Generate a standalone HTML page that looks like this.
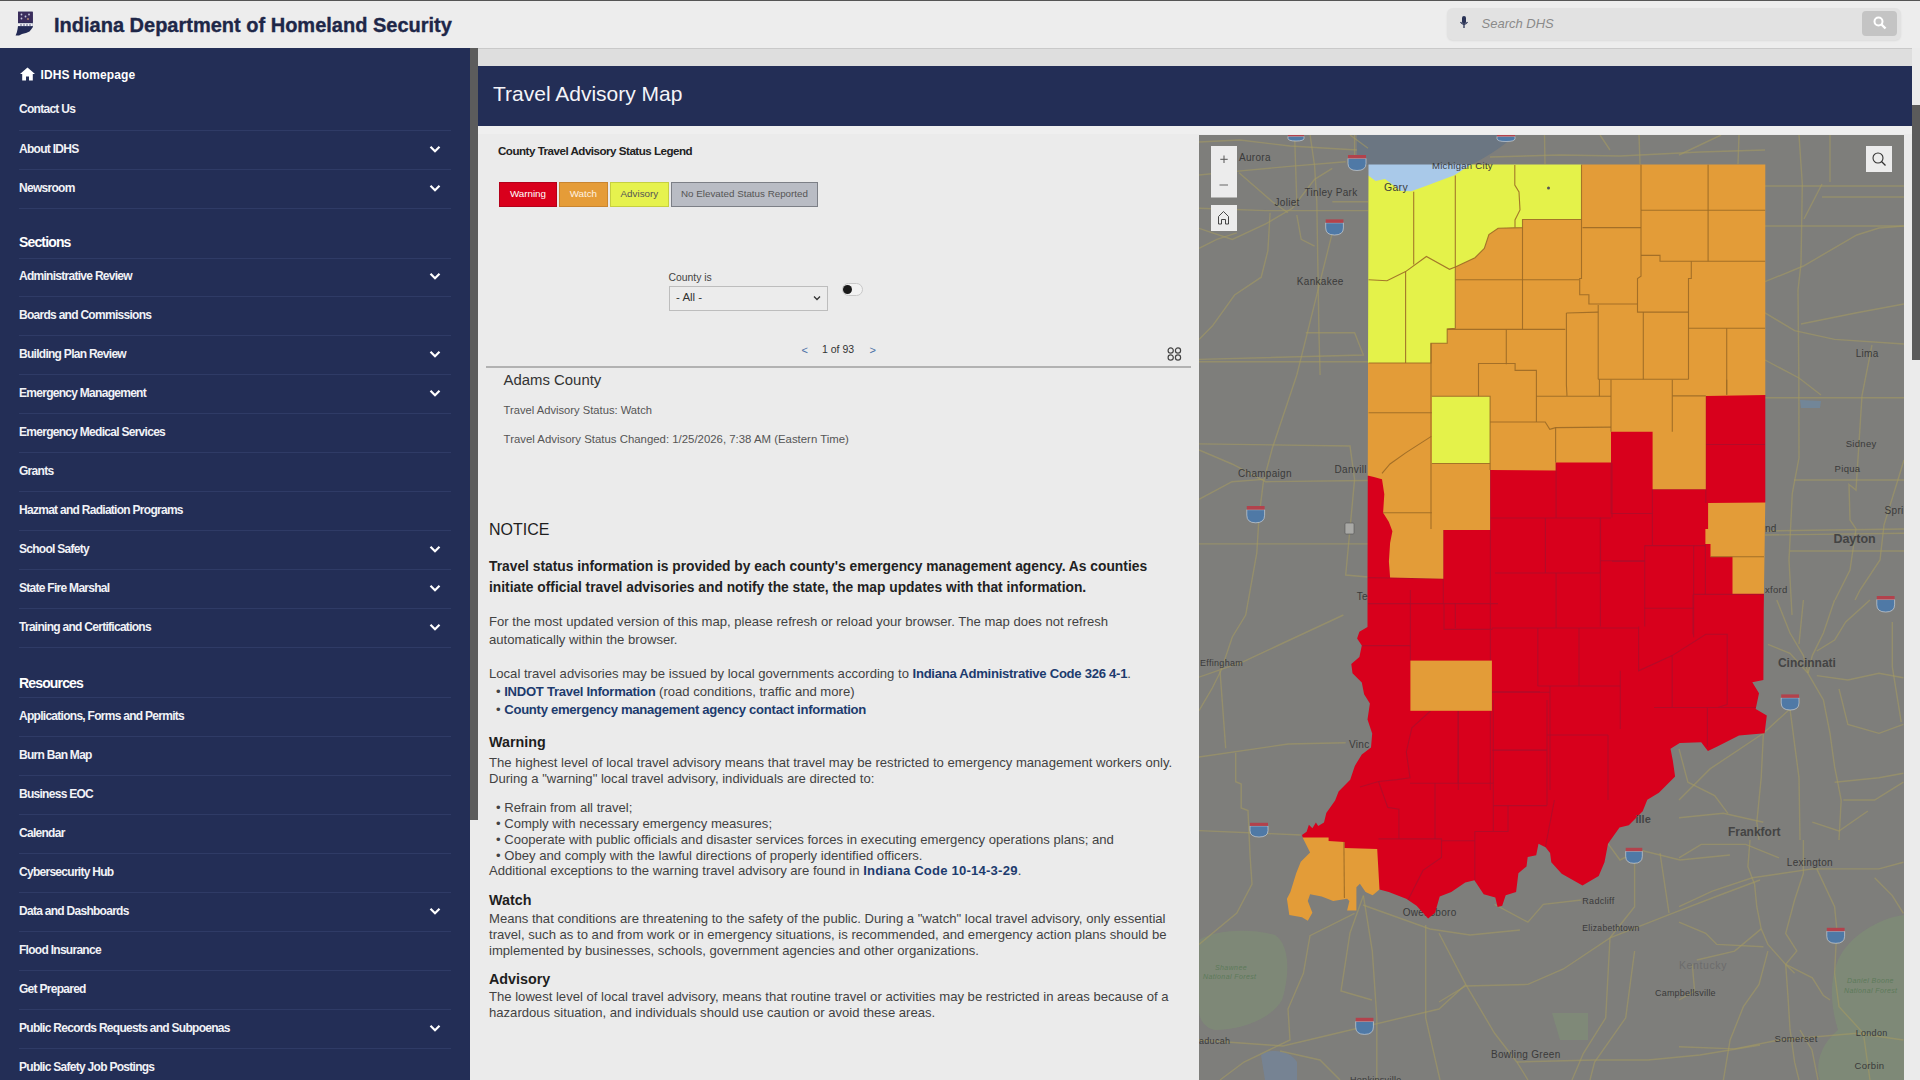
<!DOCTYPE html>
<html><head><meta charset="utf-8">
<style>
*{box-sizing:border-box;margin:0;padding:0}
html,body{width:1920px;height:1080px;overflow:hidden;background:#ebebeb;font-family:"Liberation Sans",sans-serif}
.tx{position:absolute;white-space:nowrap}
#topline{position:absolute;left:0;top:0;width:1920px;height:1px;background:#555}
#hdr{position:absolute;left:0;top:1px;width:1920px;height:47px;background:#ededed}
#hdr .title{position:absolute;left:54px;top:13px;font-size:20px;font-weight:bold;color:#1e2748;white-space:nowrap;-webkit-text-stroke:0.35px #1e2748}
#search{position:absolute;left:1446.5px;top:7px;width:454px;height:32px;background:#e2e2e2;border-radius:6px;box-shadow:0 1px 2px rgba(0,0,0,.08)}
#search .ph{position:absolute;left:35px;top:8px;font-size:13px;font-style:italic;color:#8a8a8a}
#search .btn{position:absolute;left:415.5px;top:3.4px;width:35px;height:24.6px;background:#c4c4c4;border-radius:4px}
#side{position:absolute;left:0;top:48px;width:470px;height:1032px;background:#232e56}
#sbar{position:absolute;left:470px;top:48px;width:8px;height:772px;background:#5c5c5c}
#side .sep{position:absolute;left:19px;width:432px;height:1px;background:#2f3b66}
#side .chev{position:absolute;left:429px}
#strip{position:absolute;left:478px;top:48px;width:1434px;height:18px;background:#dedede}
#tbar{position:absolute;left:478px;top:66px;width:1434px;height:60px;background:#232e56}
#tbar .t{position:absolute;left:15px;top:16px;font-size:21px;color:#f4f4f8;white-space:nowrap}
#pscroll{position:absolute;left:1912px;top:105px;width:8px;height:255px;background:#5b5b5b}
#left{position:absolute;left:478px;top:126px;width:721px;height:954px;color:#2b2b2b}
#map{position:absolute;left:1199px;top:135px;width:705px;height:945px;background:#7d7d79;overflow:hidden}
.lg{position:absolute;font-size:9.8px;text-align:center;line-height:22px;white-space:nowrap}

#left b{letter-spacing:-0.28px}

</style></head>
<body>
<div id="topline"></div>
<div id="hdr">
  <svg style="position:absolute;left:0;top:-1px" width="50" height="48" viewBox="0 0 50 48">
    <path d="M18,11.7 L32.7,11.7 L32.9,27 L31.5,29 L29.5,31.5 L26,33 L22,34 L19,35.5 L15.6,35.5 L16.8,32.5 L17.6,29 L18,26 Z" fill="#232a55"/>
    <path d="M18,11.7 L32.7,11.7 L32.8,22.5 L18,22.5 Z" fill="#3a2d5c"/>
    <rect x="18" y="23.2" width="14.8" height="2.9" fill="#f4f4f8"/>
    <circle cx="21.5" cy="14.5" r=".9" fill="#c9c9e0"/><circle cx="25.5" cy="16.5" r=".9" fill="#c9c9e0"/><circle cx="29" cy="14.5" r=".9" fill="#c9c9e0"/><circle cx="21.5" cy="18.5" r=".9" fill="#c9c9e0"/><circle cx="28" cy="19" r="1" fill="#b08a70"/>
    <path d="M21,24 L21,26 M24,24 L24,26 M27,24 L27,26 M30,24 L30,26" stroke="#3a3f66" stroke-width=".8"/>
  </svg>
  <div class="title">Indiana Department of Homeland Security</div>
  <div id="search">
    <svg style="position:absolute;left:12px;top:7px" width="10" height="16" viewBox="0 0 10 16"><rect x="3" y="1" width="4" height="8" rx="2" fill="#2a3356"/><path d="M1.5 7 Q5 12 8.5 7 M5 10 L5 13" stroke="#2a3356" stroke-width="1.3" fill="none"/></svg>
    <div class="ph">Search DHS</div>
    <div class="btn"><svg style="position:absolute;left:11px;top:5px" width="14" height="14" viewBox="0 0 14 14"><circle cx="5.5" cy="5.5" r="4" stroke="#fff" stroke-width="2" fill="none"/><path d="M8.5 8.5 L12.5 12.5" stroke="#fff" stroke-width="2.4"/></svg></div>
  </div>
</div>
<div id="side">
<svg style="position:absolute;left:20px;top:19px" width="15" height="14" viewBox="0 0 15 14"><path d="M7.5 0.5 L15 7 L12.8 7 L12.8 13.5 L9 13.5 L9 9.5 L6 9.5 L6 13.5 L2.2 13.5 L2.2 7 L0 7 Z" fill="#fff"/></svg><div class="tx" style="left:40.5px;top:20.94px;font-size:12px;line-height:12px;font-weight:bold;color:#fff;letter-spacing:0.1px;">IDHS Homepage</div>
<div class="tx" style="left:19px;top:54.99px;font-size:12px;line-height:12px;font-weight:bold;color:#f1f2f6;letter-spacing:-0.72px;">Contact Us</div>
<div class="tx" style="left:19px;top:95.24px;font-size:12px;line-height:12px;font-weight:bold;color:#f1f2f6;letter-spacing:-0.72px;">About IDHS</div>
<svg class="chev" style="top:97.2px" width="12" height="9" viewBox="0 0 12 9"><path d="M1.5 1.8 L6 6.3 L10.5 1.8" stroke="#fff" stroke-width="2.2" fill="none"/></svg><div class="tx" style="left:19px;top:134.24px;font-size:12px;line-height:12px;font-weight:bold;color:#f1f2f6;letter-spacing:-0.72px;">Newsroom</div>
<svg class="chev" style="top:136.2px" width="12" height="9" viewBox="0 0 12 9"><path d="M1.5 1.8 L6 6.3 L10.5 1.8" stroke="#fff" stroke-width="2.2" fill="none"/></svg><div class="tx" style="left:19px;top:222.24px;font-size:12px;line-height:12px;font-weight:bold;color:#f1f2f6;letter-spacing:-0.72px;">Administrative Review</div>
<svg class="chev" style="top:224.2px" width="12" height="9" viewBox="0 0 12 9"><path d="M1.5 1.8 L6 6.3 L10.5 1.8" stroke="#fff" stroke-width="2.2" fill="none"/></svg><div class="tx" style="left:19px;top:261.24px;font-size:12px;line-height:12px;font-weight:bold;color:#f1f2f6;letter-spacing:-0.72px;">Boards and Commissions</div>
<div class="tx" style="left:19px;top:300.24px;font-size:12px;line-height:12px;font-weight:bold;color:#f1f2f6;letter-spacing:-0.72px;">Building Plan Review</div>
<svg class="chev" style="top:302.2px" width="12" height="9" viewBox="0 0 12 9"><path d="M1.5 1.8 L6 6.3 L10.5 1.8" stroke="#fff" stroke-width="2.2" fill="none"/></svg><div class="tx" style="left:19px;top:339.24px;font-size:12px;line-height:12px;font-weight:bold;color:#f1f2f6;letter-spacing:-0.72px;">Emergency Management</div>
<svg class="chev" style="top:341.2px" width="12" height="9" viewBox="0 0 12 9"><path d="M1.5 1.8 L6 6.3 L10.5 1.8" stroke="#fff" stroke-width="2.2" fill="none"/></svg><div class="tx" style="left:19px;top:378.24px;font-size:12px;line-height:12px;font-weight:bold;color:#f1f2f6;letter-spacing:-0.72px;">Emergency Medical Services</div>
<div class="tx" style="left:19px;top:417.24px;font-size:12px;line-height:12px;font-weight:bold;color:#f1f2f6;letter-spacing:-0.72px;">Grants</div>
<div class="tx" style="left:19px;top:456.24px;font-size:12px;line-height:12px;font-weight:bold;color:#f1f2f6;letter-spacing:-0.72px;">Hazmat and Radiation Programs</div>
<div class="tx" style="left:19px;top:495.24px;font-size:12px;line-height:12px;font-weight:bold;color:#f1f2f6;letter-spacing:-0.72px;">School Safety</div>
<svg class="chev" style="top:497.2px" width="12" height="9" viewBox="0 0 12 9"><path d="M1.5 1.8 L6 6.3 L10.5 1.8" stroke="#fff" stroke-width="2.2" fill="none"/></svg><div class="tx" style="left:19px;top:534.24px;font-size:12px;line-height:12px;font-weight:bold;color:#f1f2f6;letter-spacing:-0.72px;">State Fire Marshal</div>
<svg class="chev" style="top:536.2px" width="12" height="9" viewBox="0 0 12 9"><path d="M1.5 1.8 L6 6.3 L10.5 1.8" stroke="#fff" stroke-width="2.2" fill="none"/></svg><div class="tx" style="left:19px;top:573.24px;font-size:12px;line-height:12px;font-weight:bold;color:#f1f2f6;letter-spacing:-0.72px;">Training and Certifications</div>
<svg class="chev" style="top:575.2px" width="12" height="9" viewBox="0 0 12 9"><path d="M1.5 1.8 L6 6.3 L10.5 1.8" stroke="#fff" stroke-width="2.2" fill="none"/></svg><div class="tx" style="left:19px;top:662.24px;font-size:12px;line-height:12px;font-weight:bold;color:#f1f2f6;letter-spacing:-0.72px;">Applications, Forms and Permits</div>
<div class="tx" style="left:19px;top:701.24px;font-size:12px;line-height:12px;font-weight:bold;color:#f1f2f6;letter-spacing:-0.72px;">Burn Ban Map</div>
<div class="tx" style="left:19px;top:740.24px;font-size:12px;line-height:12px;font-weight:bold;color:#f1f2f6;letter-spacing:-0.72px;">Business EOC</div>
<div class="tx" style="left:19px;top:779.24px;font-size:12px;line-height:12px;font-weight:bold;color:#f1f2f6;letter-spacing:-0.72px;">Calendar</div>
<div class="tx" style="left:19px;top:818.24px;font-size:12px;line-height:12px;font-weight:bold;color:#f1f2f6;letter-spacing:-0.72px;">Cybersecurity Hub</div>
<div class="tx" style="left:19px;top:857.24px;font-size:12px;line-height:12px;font-weight:bold;color:#f1f2f6;letter-spacing:-0.72px;">Data and Dashboards</div>
<svg class="chev" style="top:859.2px" width="12" height="9" viewBox="0 0 12 9"><path d="M1.5 1.8 L6 6.3 L10.5 1.8" stroke="#fff" stroke-width="2.2" fill="none"/></svg><div class="tx" style="left:19px;top:896.24px;font-size:12px;line-height:12px;font-weight:bold;color:#f1f2f6;letter-spacing:-0.72px;">Flood Insurance</div>
<div class="tx" style="left:19px;top:935.24px;font-size:12px;line-height:12px;font-weight:bold;color:#f1f2f6;letter-spacing:-0.72px;">Get Prepared</div>
<div class="tx" style="left:19px;top:974.24px;font-size:12px;line-height:12px;font-weight:bold;color:#f1f2f6;letter-spacing:-0.72px;">Public Records Requests and Subpoenas</div>
<svg class="chev" style="top:976.2px" width="12" height="9" viewBox="0 0 12 9"><path d="M1.5 1.8 L6 6.3 L10.5 1.8" stroke="#fff" stroke-width="2.2" fill="none"/></svg><div class="tx" style="left:19px;top:1013.24px;font-size:12px;line-height:12px;font-weight:bold;color:#f1f2f6;letter-spacing:-0.72px;">Public Safety Job Postings</div>
<div class="sep" style="top:82px"></div><div class="sep" style="top:121px"></div><div class="sep" style="top:159.5px"></div><div class="sep" style="top:209.5px"></div><div class="sep" style="top:248px"></div><div class="sep" style="top:287px"></div><div class="sep" style="top:326px"></div><div class="sep" style="top:365px"></div><div class="sep" style="top:404px"></div><div class="sep" style="top:443px"></div><div class="sep" style="top:482px"></div><div class="sep" style="top:521px"></div><div class="sep" style="top:560px"></div><div class="sep" style="top:599px"></div><div class="sep" style="top:648.75px"></div><div class="sep" style="top:688px"></div><div class="sep" style="top:727px"></div><div class="sep" style="top:766px"></div><div class="sep" style="top:805px"></div><div class="sep" style="top:844px"></div><div class="sep" style="top:883px"></div><div class="sep" style="top:922px"></div><div class="sep" style="top:961px"></div><div class="sep" style="top:1000px"></div><div class="sep" style="top:1039px"></div><div class="tx" style="left:19px;top:187.18px;font-size:14px;line-height:14px;font-weight:bold;color:#fff;letter-spacing:-0.85px;">Sections</div>
<div class="tx" style="left:19px;top:627.68px;font-size:14px;line-height:14px;font-weight:bold;color:#fff;letter-spacing:-0.85px;">Resources</div>

</div>
<div id="sbar"></div>
<div id="strip"></div>
<div style="position:absolute;left:478px;top:48px;width:1434px;height:1px;background:#c9c9c9"></div>
<div id="tbar"><div class="t">Travel Advisory Map</div></div>
<div id="pscroll"></div>
<div style="position:absolute;left:478px;top:126px;width:1434px;height:8px;background:#efefef"></div>
<div id="left">
<div class="tx" style="left:20px;top:19.19px;font-size:11.6px;line-height:11.6px;font-weight:bold;color:#222;letter-spacing:-0.5px;">County Travel Advisory Status Legend</div>
<div class="lg" style="left:21.19999999999999px;top:55.5px;width:57.50000000000006px;height:25.5px;background:#d9001c;border:1.5px solid #b3001a;color:#fff">Warning</div><div class="lg" style="left:81px;top:55.5px;width:48.700000000000045px;height:25.5px;background:#e59c38;border:1.5px solid #c98530;color:#fff3e0">Watch</div><div class="lg" style="left:132px;top:55.5px;width:58.75px;height:25.5px;background:#e6f24e;border:1.5px solid #c6d040;color:#555">Advisory</div><div class="lg" style="left:193px;top:55.5px;width:147px;height:25.5px;background:#b9bcc4;border:1.5px solid #7c7f86;color:#555">No Elevated Status Reported</div><div class="tx" style="left:190.5px;top:147.15px;font-size:10.4px;line-height:10.4px;font-weight:normal;color:#444;letter-spacing:0px;">County is</div>
<div style="position:absolute;left:190.5px;top:160px;width:159px;height:25px;border:1px solid #bdbdbd;background:#ececec"></div><div class="tx" style="left:198px;top:166.00px;font-size:11.5px;line-height:11.5px;font-weight:normal;color:#333;letter-spacing:0px;">- All -</div>
<svg style="position:absolute;left:335px;top:169px" width="8" height="6" viewBox="0 0 8 6"><path d="M1 1.5 L4 4.5 L7 1.5" stroke="#333" stroke-width="1.3" fill="none"/></svg><div style="position:absolute;left:363.5px;top:157px;width:21.5px;height:13px;border:1px solid #c8c8c8;border-radius:7px;background:#f2f2f2"></div><div style="position:absolute;left:365px;top:159px;width:9px;height:9px;border-radius:5px;background:#1a1a1a"></div><div class="tx" style="left:323.5px;top:219.07px;font-size:11px;line-height:11px;font-weight:normal;color:#4a6fa5;letter-spacing:0px;">&lt;</div>
<div class="tx" style="left:344px;top:217.63px;font-size:10.5px;line-height:10.5px;font-weight:normal;color:#333;letter-spacing:0px;">1 of 93</div>
<div class="tx" style="left:391.5px;top:219.07px;font-size:11px;line-height:11px;font-weight:normal;color:#4a6fa5;letter-spacing:0px;">&gt;</div>
<svg style="position:absolute;left:689px;top:221px" width="15" height="14" viewBox="0 0 15 14"><g stroke="#444" stroke-width="1.2" fill="none"><circle cx="3.7" cy="3.5" r="2.6"/><circle cx="11" cy="3.5" r="2.6"/><circle cx="3.7" cy="10.5" r="2.6"/><circle cx="11" cy="10.5" r="2.6"/></g></svg><div style="position:absolute;left:7.600000000000023px;top:239.5px;width:705px;height:2px;background:#b2b2b2"></div><div class="tx" style="left:25.600000000000023px;top:247.06px;font-size:14.9px;line-height:14.9px;font-weight:normal;color:#333;letter-spacing:0px;">Adams County</div>
<div class="tx" style="left:25.600000000000023px;top:279.44px;font-size:11.2px;line-height:11.2px;font-weight:normal;color:#555;letter-spacing:0px;">Travel Advisory Status: Watch</div>
<div class="tx" style="left:25.600000000000023px;top:307.52px;font-size:11.4px;line-height:11.4px;font-weight:normal;color:#555;letter-spacing:0px;">Travel Advisory Status Changed: 1/25/2026, 7:38 AM (Eastern Time)</div>
<div class="tx" style="left:11px;top:395.72px;font-size:16px;line-height:16px;font-weight:normal;color:#1e1e1e;letter-spacing:0px;">NOTICE</div>
<div class="tx" style="left:11px;top:433.51px;font-size:13.8px;line-height:13.8px;font-weight:bold;color:#222;letter-spacing:0px;">Travel status information is provided by each county&#x27;s emergency management agency. As counties</div>
<div class="tx" style="left:11px;top:454.51px;font-size:13.8px;line-height:13.8px;font-weight:bold;color:#222;letter-spacing:0px;">initiate official travel advisories and notify the state, the map updates with that information.</div>
<div class="tx" style="left:11px;top:489.20px;font-size:13.1px;line-height:13.1px;font-weight:normal;color:#424242;letter-spacing:0px;">For the most updated version of this map, please refresh or reload your browser. The map does not refresh</div>
<div class="tx" style="left:11px;top:507.20px;font-size:13.1px;line-height:13.1px;font-weight:normal;color:#424242;letter-spacing:0px;">automatically within the browser.</div>
<div class="tx" style="left:11px;top:540.50px;font-size:13.1px;line-height:13.1px;font-weight:normal;color:#424242;letter-spacing:0px;">Local travel advisories may be issued by local governments according to <b style="color:#1d3b6e">Indiana Administrative Code 326 4-1</b>.</div>
<div class="tx" style="left:18px;top:558.50px;font-size:13.1px;line-height:13.1px;font-weight:normal;color:#424242;letter-spacing:0px;">&bull; <b style="color:#1d3b6e">INDOT Travel Information</b> (road conditions, traffic and more)</div>
<div class="tx" style="left:18px;top:576.50px;font-size:13.1px;line-height:13.1px;font-weight:normal;color:#424242;letter-spacing:0px;">&bull; <b style="color:#1d3b6e">County emergency management agency contact information</b></div>
<div class="tx" style="left:11px;top:609.04px;font-size:14.3px;line-height:14.3px;font-weight:bold;color:#1e1e1e;letter-spacing:0px;">Warning</div>
<div class="tx" style="left:11px;top:629.80px;font-size:13.1px;line-height:13.1px;font-weight:normal;color:#424242;letter-spacing:0px;">The highest level of local travel advisory means that travel may be restricted to emergency management workers only.</div>
<div class="tx" style="left:11px;top:645.50px;font-size:13.1px;line-height:13.1px;font-weight:normal;color:#424242;letter-spacing:0px;">During a &quot;warning&quot; local travel advisory, individuals are directed to:</div>
<div class="tx" style="left:18px;top:674.80px;font-size:13.1px;line-height:13.1px;font-weight:normal;color:#424242;letter-spacing:0px;">&bull; Refrain from all travel;</div>
<div class="tx" style="left:18px;top:691.00px;font-size:13.1px;line-height:13.1px;font-weight:normal;color:#424242;letter-spacing:0px;">&bull; Comply with necessary emergency measures;</div>
<div class="tx" style="left:18px;top:707.20px;font-size:13.1px;line-height:13.1px;font-weight:normal;color:#424242;letter-spacing:0px;">&bull; Cooperate with public officials and disaster services forces in executing emergency operations plans; and</div>
<div class="tx" style="left:18px;top:723.40px;font-size:13.1px;line-height:13.1px;font-weight:normal;color:#424242;letter-spacing:0px;">&bull; Obey and comply with the lawful directions of properly identified officers.</div>
<div class="tx" style="left:11px;top:737.90px;font-size:13.1px;line-height:13.1px;font-weight:normal;color:#424242;letter-spacing:0px;">Additional exceptions to the warning travel advisory are found in <b style="color:#1d3b6e;letter-spacing:0.2px">Indiana Code 10-14-3-29</b>.</div>
<div class="tx" style="left:11px;top:767.04px;font-size:14.3px;line-height:14.3px;font-weight:bold;color:#1e1e1e;letter-spacing:0px;">Watch</div>
<div class="tx" style="left:11px;top:785.50px;font-size:13.1px;line-height:13.1px;font-weight:normal;color:#424242;letter-spacing:0px;">Means that conditions are threatening to the safety of the public. During a &quot;watch&quot; local travel advisory, only essential</div>
<div class="tx" style="left:11px;top:801.70px;font-size:13.1px;line-height:13.1px;font-weight:normal;color:#424242;letter-spacing:0px;">travel, such as to and from work or in emergency situations, is recommended, and emergency action plans should be</div>
<div class="tx" style="left:11px;top:817.80px;font-size:13.1px;line-height:13.1px;font-weight:normal;color:#424242;letter-spacing:0px;">implemented by businesses, schools, government agencies and other organizations.</div>
<div class="tx" style="left:11px;top:845.74px;font-size:14.3px;line-height:14.3px;font-weight:bold;color:#1e1e1e;letter-spacing:0px;">Advisory</div>
<div class="tx" style="left:11px;top:864.30px;font-size:13.1px;line-height:13.1px;font-weight:normal;color:#424242;letter-spacing:0px;">The lowest level of local travel advisory, means that routine travel or activities may be restricted in areas because of a</div>
<div class="tx" style="left:11px;top:880.30px;font-size:13.1px;line-height:13.1px;font-weight:normal;color:#424242;letter-spacing:0px;">hazardous situation, and individuals should use caution or avoid these areas.</div>

</div>
<div id="map">
<svg width="705" height="945" viewBox="1199 135 705 945" style="position:absolute;left:0;top:0">
<rect x="1199" y="135" width="705" height="945" fill="#7e7e7b"/>
<path d="M1199,940 C1215,930 1250,928 1275,935 C1290,945 1290,975 1282,1000 C1270,1020 1240,1030 1215,1030 C1205,1028 1199,1020 1199,1010 Z" fill="#7f8f75" opacity=".6"/>
<path d="M1552,1013 L1588,1013 L1588,1040 L1560,1040 Z" fill="#809276" opacity=".55"/>
<path d="M1904,915 C1880,918 1850,935 1838,960 C1828,985 1832,1010 1838,1030 C1820,1045 1815,1065 1820,1080 L1904,1080 Z" fill="#7e9175" opacity=".6"/>
<path d="M1261,1055 C1270,1048 1290,1050 1297,1062 L1297,1080 L1265,1080 Z" fill="#74859a" opacity=".8"/>
<path d="M1800,400 L1821,401 L1820,408 L1801,408 Z" fill="#6f88a0" opacity=".8"/>
<path d="M1357,135 L1515,135 C1505,145 1490,155 1471,165 L1357,165 Z" fill="#6b7682"/>
<polyline points="1296.8,375.0 1272.3,448.3 1263.4,481.7 1259.0,517.0 1256.8,552.8 1245.7,615.0 1232.3,637.0 1221.0,670.6 1212.3,688.0 1199.0,710.6" fill="none" stroke="#a39a62" stroke-width="1.4" opacity=".6"/>
<polyline points="1199.0,443.9 1350.0,446.0 1354.6,479.4 1345.7,575.0 1368.0,577.0" fill="none" stroke="#a39a62" stroke-width="1.4" opacity=".6"/>
<polyline points="1199.0,450.0 1232.0,464.0 1265.7,481.7 1368.0,480.5" fill="none" stroke="#a39a62" stroke-width="1.4" opacity=".6"/>
<polyline points="1199.0,499.4 1232.0,481.7 1263.4,479.4" fill="none" stroke="#a39a62" stroke-width="1.4" opacity=".6"/>
<polyline points="1199.0,543.9 1368.0,543.9" fill="none" stroke="#a39a62" stroke-width="1.4" opacity=".6"/>
<polyline points="1343.4,615.0 1276.8,646.0 1243.4,661.7 1199.0,677.2" fill="none" stroke="#a39a62" stroke-width="1.4" opacity=".6"/>
<polyline points="1220.0,670.6 1225.7,748.3" fill="none" stroke="#a39a62" stroke-width="1.4" opacity=".6"/>
<polyline points="1199.0,757.0 1288.0,744.0 1345.7,742.8" fill="none" stroke="#a39a62" stroke-width="1.4" opacity=".6"/>
<polyline points="1235.7,752.8 1235.7,781.7 1241.2,784.0 1241.2,808.0 1248.0,810.6 1250.0,855.0 1252.0,884.0 1236.8,913.0 1199.0,944.4" fill="none" stroke="#a39a62" stroke-width="1.4" opacity=".6"/>
<polyline points="1199.0,830.6 1301.0,835.0" fill="none" stroke="#a39a62" stroke-width="1.4" opacity=".6"/>
<polyline points="1294.6,135.0 1296.8,201.7" fill="none" stroke="#a39a62" stroke-width="1.4" opacity=".6"/>
<polyline points="1310.1,135.0 1314.6,166.0 1316.8,201.7 1319.0,335.0 1320.1,375.0" fill="none" stroke="#a39a62" stroke-width="1.4" opacity=".6"/>
<polyline points="1354.6,135.0 1354.6,161.7" fill="none" stroke="#a39a62" stroke-width="1.4" opacity=".6"/>
<polyline points="1239.0,172.8 1272.3,201.7 1287.9,212.8" fill="none" stroke="#a39a62" stroke-width="1.4" opacity=".6"/>
<polyline points="1199.0,175.0 1243.4,170.6 1292.3,166.1 1345.7,161.7" fill="none" stroke="#a39a62" stroke-width="1.4" opacity=".6"/>
<polyline points="1199.0,142.0 1240.0,140.0 1290.0,146.0 1357.0,150.0" fill="none" stroke="#a39a62" stroke-width="1.4" opacity=".6"/>
<polyline points="1199.0,208.3 1265.7,210.6 1368.0,210.6" fill="none" stroke="#a39a62" stroke-width="1.4" opacity=".6"/>
<polyline points="1199.0,228.3 1232.3,239.4 1265.7,223.9 1292.3,208.3 1314.6,179.4 1332.3,168.3" fill="none" stroke="#a39a62" stroke-width="1.4" opacity=".6"/>
<polyline points="1270.1,212.8 1267.9,250.6 1261.2,277.2 1234.6,295.0 1212.3,326.1 1199.0,339.4" fill="none" stroke="#a39a62" stroke-width="1.4" opacity=".6"/>
<polyline points="1332.3,232.8 1321.2,277.2 1307.9,330.6 1296.8,375.0" fill="none" stroke="#a39a62" stroke-width="1.4" opacity=".6"/>
<polyline points="1296.8,215.0 1301.2,239.4 1314.6,246.1" fill="none" stroke="#a39a62" stroke-width="1.4" opacity=".6"/>
<polyline points="1199.0,248.3 1216.8,239.4 1236.8,232.8" fill="none" stroke="#a39a62" stroke-width="1.4" opacity=".6"/>
<polyline points="1305.7,332.8 1354.6,332.8 1363.4,355.0 1199.0,359.4" fill="none" stroke="#a39a62" stroke-width="1.4" opacity=".6"/>
<polyline points="1199.0,361.7 1368.0,361.7" fill="none" stroke="#a39a62" stroke-width="1.4" opacity=".6"/>
<polyline points="1332.3,201.7 1368.0,201.7" fill="none" stroke="#a39a62" stroke-width="1.4" opacity=".6"/>
<polyline points="1350.0,135.0 1368.0,148.3" fill="none" stroke="#a39a62" stroke-width="1.4" opacity=".6"/>
<polyline points="1544.5,135.0 1545.0,164.0" fill="none" stroke="#a39a62" stroke-width="1.4" opacity=".6"/>
<polyline points="1639.0,135.0 1640.0,164.0" fill="none" stroke="#a39a62" stroke-width="1.4" opacity=".6"/>
<polyline points="1490.0,157.0 1560.0,155.0 1620.0,156.0 1700.0,152.0 1765.0,150.0" fill="none" stroke="#a39a62" stroke-width="1.4" opacity=".6"/>
<polyline points="1600.0,135.0 1610.0,150.0" fill="none" stroke="#a39a62" stroke-width="1.4" opacity=".6"/>
<polyline points="1363.4,895.6 1350.0,933.0 1341.0,991.0 1372.0,1000.0" fill="none" stroke="#a39a62" stroke-width="1.4" opacity=".6"/>
<polyline points="1363.4,895.6 1372.3,951.0 1376.8,1017.8 1376.8,1080.0" fill="none" stroke="#a39a62" stroke-width="1.4" opacity=".6"/>
<polyline points="1354.6,913.3 1310.0,935.6 1303.4,973.3 1288.0,1009.0 1290.0,1040.0 1244.0,1062.0 1220.0,1080.0" fill="none" stroke="#a39a62" stroke-width="1.4" opacity=".6"/>
<polyline points="1199.0,1040.0 1283.0,1046.0 1354.6,1029.0 1439.0,1009.0 1465.7,984.4" fill="none" stroke="#a39a62" stroke-width="1.4" opacity=".6"/>
<polyline points="1363.0,905.0 1430.0,929.0 1470.0,935.0 1520.0,930.0" fill="none" stroke="#a39a62" stroke-width="1.4" opacity=".6"/>
<polyline points="1425.7,925.0 1425.7,1017.8 1440.0,1080.0" fill="none" stroke="#a39a62" stroke-width="1.4" opacity=".6"/>
<polyline points="1280.0,1051.0 1320.0,1060.0 1340.0,1080.0" fill="none" stroke="#a39a62" stroke-width="1.4" opacity=".6"/>
<polyline points="1439.0,933.3 1465.7,984.4 1494.6,1033.3 1516.8,1062.0 1528.0,1080.0" fill="none" stroke="#a39a62" stroke-width="1.4" opacity=".6"/>
<polyline points="1439.0,1002.0 1465.7,986.0 1527.9,984.4 1563.4,969.0 1610.0,937.8 1672.3,913.3 1720.0,895.0 1760.0,880.0" fill="none" stroke="#a39a62" stroke-width="1.4" opacity=".6"/>
<polyline points="1610.0,937.8 1605.7,1017.8 1583.4,1053.3 1572.0,1080.0" fill="none" stroke="#a39a62" stroke-width="1.4" opacity=".6"/>
<polyline points="1634.6,862.0 1634.6,906.7 1610.0,937.8" fill="none" stroke="#a39a62" stroke-width="1.4" opacity=".6"/>
<polyline points="1494.6,904.4 1527.9,922.2 1543.4,904.4 1581.2,900.0" fill="none" stroke="#a39a62" stroke-width="1.4" opacity=".6"/>
<polyline points="1660.0,853.0 1669.0,913.0" fill="none" stroke="#a39a62" stroke-width="1.4" opacity=".6"/>
<polyline points="1634.6,951.0 1625.7,1017.8 1594.6,1062.0 1590.0,1080.0" fill="none" stroke="#a39a62" stroke-width="1.4" opacity=".6"/>
<polyline points="1516.8,1062.0 1594.6,1060.0 1648.0,1060.0 1700.0,1055.0 1760.0,1045.0" fill="none" stroke="#a39a62" stroke-width="1.4" opacity=".6"/>
<polyline points="1608.0,843.7 1620.0,860.0 1640.0,850.0 1680.0,860.0 1730.0,855.0" fill="none" stroke="#a39a62" stroke-width="1.4" opacity=".6"/>
<polyline points="1799.0,135.0 1802.3,184.0 1801.0,264.0 1798.0,290.0 1798.8,375.0 1799.0,457.8 1792.3,493.3 1789.0,560.0 1792.0,615.0" fill="none" stroke="#a39a62" stroke-width="1.4" opacity=".6"/>
<polyline points="1739.0,135.0 1738.0,164.0" fill="none" stroke="#a39a62" stroke-width="1.4" opacity=".6"/>
<polyline points="1679.0,155.0 1721.0,135.0" fill="none" stroke="#a39a62" stroke-width="1.4" opacity=".6"/>
<polyline points="1830.0,135.0 1830.0,182.0" fill="none" stroke="#a39a62" stroke-width="1.4" opacity=".6"/>
<polyline points="1765.0,186.0 1904.0,186.0" fill="none" stroke="#a39a62" stroke-width="1.4" opacity=".6"/>
<polyline points="1822.0,197.0 1904.0,197.0" fill="none" stroke="#a39a62" stroke-width="1.4" opacity=".6"/>
<polyline points="1822.0,184.0 1804.0,219.0" fill="none" stroke="#a39a62" stroke-width="1.4" opacity=".6"/>
<polyline points="1765.0,226.0 1904.0,226.0" fill="none" stroke="#a39a62" stroke-width="1.4" opacity=".6"/>
<polyline points="1765.0,281.7 1803.4,266.0 1856.8,235.0 1879.0,228.0 1904.0,226.0" fill="none" stroke="#a39a62" stroke-width="1.4" opacity=".6"/>
<polyline points="1765.0,312.8 1794.6,330.6 1834.6,339.4 1904.0,344.0" fill="none" stroke="#a39a62" stroke-width="1.4" opacity=".6"/>
<polyline points="1801.0,324.0 1856.8,312.8 1904.0,304.0" fill="none" stroke="#a39a62" stroke-width="1.4" opacity=".6"/>
<polyline points="1872.0,345.0 1862.0,395.6 1856.0,490.0 1849.0,484.4 1850.0,520.0 1856.0,528.9 1850.0,570.0 1835.0,600.0" fill="none" stroke="#a39a62" stroke-width="1.4" opacity=".6"/>
<polyline points="1765.0,397.8 1904.0,397.8" fill="none" stroke="#a39a62" stroke-width="1.4" opacity=".6"/>
<polyline points="1794.0,480.0 1904.0,480.0" fill="none" stroke="#a39a62" stroke-width="1.4" opacity=".6"/>
<polyline points="1765.0,531.0 1904.0,529.0" fill="none" stroke="#a39a62" stroke-width="1.4" opacity=".6"/>
<polyline points="1765.0,535.0 1904.0,533.3" fill="none" stroke="#a39a62" stroke-width="1.4" opacity=".6"/>
<polyline points="1790.0,551.0 1904.0,551.0" fill="none" stroke="#a39a62" stroke-width="1.4" opacity=".6"/>
<polyline points="1765.0,360.0 1799.0,378.0 1821.0,395.0" fill="none" stroke="#a39a62" stroke-width="1.4" opacity=".6"/>
<polyline points="1904.0,460.0 1884.0,525.0 1880.0,560.0 1860.0,590.0 1855.0,600.0" fill="none" stroke="#a39a62" stroke-width="1.4" opacity=".6"/>
<polyline points="1776.8,600.0 1790.0,633.0 1803.4,655.6 1808.0,673.3" fill="none" stroke="#a39a62" stroke-width="1.4" opacity=".6"/>
<polyline points="1834.6,600.0 1823.4,633.0 1812.3,655.6 1808.0,673.3" fill="none" stroke="#a39a62" stroke-width="1.4" opacity=".6"/>
<polyline points="1803.4,600.0 1799.0,644.0" fill="none" stroke="#a39a62" stroke-width="1.4" opacity=".6"/>
<polyline points="1870.0,600.0 1845.7,622.0 1834.6,640.0 1816.8,651.0" fill="none" stroke="#a39a62" stroke-width="1.4" opacity=".6"/>
<polyline points="1767.9,644.4 1790.0,653.3 1808.0,673.3" fill="none" stroke="#a39a62" stroke-width="1.4" opacity=".6"/>
<polyline points="1808.0,673.3 1823.4,700.0 1830.0,733.3 1834.6,766.7 1841.2,800.0 1839.0,840.0" fill="none" stroke="#a39a62" stroke-width="1.4" opacity=".6"/>
<polyline points="1790.0,708.9 1794.6,744.4 1799.0,777.8 1800.0,840.0" fill="none" stroke="#a39a62" stroke-width="1.4" opacity=".6"/>
<polyline points="1790.0,708.9 1763.4,733.3 1710.0,768.9 1679.0,800.0" fill="none" stroke="#a39a62" stroke-width="1.4" opacity=".6"/>
<polyline points="1763.4,733.3 1761.2,777.8 1756.8,822.2 1759.0,840.0" fill="none" stroke="#a39a62" stroke-width="1.4" opacity=".6"/>
<polyline points="1816.8,675.6 1847.9,680.0 1879.0,673.3 1903.4,677.8" fill="none" stroke="#a39a62" stroke-width="1.4" opacity=".6"/>
<polyline points="1839.0,688.9 1847.9,724.4 1879.0,733.3 1903.4,724.4" fill="none" stroke="#a39a62" stroke-width="1.4" opacity=".6"/>
<polyline points="1892.3,622.0 1892.3,666.7 1901.2,722.0" fill="none" stroke="#a39a62" stroke-width="1.4" opacity=".6"/>
<polyline points="1679.0,748.9 1687.9,782.2 1714.6,795.6 1727.9,813.3" fill="none" stroke="#a39a62" stroke-width="1.4" opacity=".6"/>
<polyline points="1834.6,782.2 1879.0,777.8 1903.4,773.3" fill="none" stroke="#a39a62" stroke-width="1.4" opacity=".6"/>
<polyline points="1843.4,800.0 1874.6,800.0 1903.4,782.2" fill="none" stroke="#a39a62" stroke-width="1.4" opacity=".6"/>
<polyline points="1812.3,822.2 1839.0,831.0 1867.9,811.0" fill="none" stroke="#a39a62" stroke-width="1.4" opacity=".6"/>
<polyline points="1679.0,817.8 1723.4,813.3 1763.4,822.2" fill="none" stroke="#a39a62" stroke-width="1.4" opacity=".6"/>
<polyline points="1750.0,840.0 1747.9,866.7 1754.6,884.4 1756.8,906.7 1761.2,928.9 1767.9,944.4 1785.7,964.4 1794.6,973.3" fill="none" stroke="#a39a62" stroke-width="1.4" opacity=".6"/>
<polyline points="1803.4,840.0 1803.4,873.3 1794.6,900.0 1785.7,933.3 1796.8,951.0 1785.7,964.4" fill="none" stroke="#a39a62" stroke-width="1.4" opacity=".6"/>
<polyline points="1785.7,964.4 1787.9,995.6 1790.0,1028.9 1794.6,1062.2 1799.0,1080.0" fill="none" stroke="#a39a62" stroke-width="1.4" opacity=".6"/>
<polyline points="1816.8,868.9 1834.6,906.7 1836.8,928.9 1834.6,973.3 1839.0,1006.7 1863.4,1033.3 1870.0,1080.0" fill="none" stroke="#a39a62" stroke-width="1.4" opacity=".6"/>
<polyline points="1679.0,906.7 1712.3,891.1 1752.3,877.8 1812.3,868.9 1879.0,868.9 1903.4,862.2" fill="none" stroke="#a39a62" stroke-width="1.4" opacity=".6"/>
<polyline points="1679.0,922.2 1705.7,933.3 1716.8,944.4 1763.4,946.7" fill="none" stroke="#a39a62" stroke-width="1.4" opacity=".6"/>
<polyline points="1761.2,928.9 1734.6,951.1 1696.8,960.0" fill="none" stroke="#a39a62" stroke-width="1.4" opacity=".6"/>
<polyline points="1767.9,951.1 1759.0,984.4 1743.4,1006.7 1730.1,1040.0 1723.4,1080.0" fill="none" stroke="#a39a62" stroke-width="1.4" opacity=".6"/>
<polyline points="1785.7,964.4 1812.3,977.8 1823.4,995.6 1830.1,1000.0" fill="none" stroke="#a39a62" stroke-width="1.4" opacity=".6"/>
<polyline points="1679.0,1046.7 1734.6,1048.9 1779.0,1040.0 1856.8,1033.3 1903.4,1040.0" fill="none" stroke="#a39a62" stroke-width="1.4" opacity=".6"/>
<polyline points="1874.6,877.8 1892.3,895.6 1903.4,913.3" fill="none" stroke="#a39a62" stroke-width="1.4" opacity=".6"/>
<polyline points="1679.0,857.8 1701.2,844.4 1745.7,844.4 1779.0,857.8" fill="none" stroke="#a39a62" stroke-width="1.4" opacity=".6"/>
<polyline points="1692.3,964.4 1694.6,991.1 1679.0,1000.0" fill="none" stroke="#a39a62" stroke-width="1.4" opacity=".6"/>
<polyline points="1818.0,1080.0 1812.0,1050.0 1800.0,1030.0" fill="none" stroke="#a39a62" stroke-width="1.4" opacity=".6"/>
<text x="1402.7" y="915.6" font-family="Liberation Sans" font-size="10" fill="#3a3a3a" letter-spacing="0.3">Owensboro</text>
<defs><clipPath id="ind"><polygon points="1368.5,164.4 1765.3,164.4 1765.3,500.0 1763.7,610.0 1763.4,680.0 1752.3,682.2 1759.0,693.3 1755.7,708.9 1766.8,715.6 1764.6,733.3 1739.0,735.6 1716.8,746.7 1707.9,751.1 1701.2,742.2 1679.7,743.0 1670.5,748.8 1672.8,760.4 1675.1,776.6 1658.9,792.8 1647.3,799.7 1642.7,811.3 1628.8,825.2 1619.5,827.5 1608.0,843.7 1604.5,862.2 1598.7,876.1 1582.5,885.4 1561.7,873.8 1551.3,862.2 1550.1,853.0 1545.5,847.2 1538.5,843.7 1536.2,855.3 1527.7,857.1 1526.5,866.4 1518.4,873.3 1516.1,891.9 1505.7,895.3 1502.2,905.7 1497.6,906.9 1495.3,897.6 1483.7,894.2 1474.4,880.3 1465.2,882.6 1451.3,891.9 1439.7,896.5 1435.1,912.7 1428.1,918.5 1416.6,905.7 1406.2,898.8 1388.8,891.9 1379.5,889.5 1372.6,895.3 1365.6,891.9 1359.9,883.8 1356.4,887.2 1356.4,910.4 1347.1,910.4 1349.4,901.1 1347.1,898.8 1333.2,901.1 1321.7,896.5 1310.1,894.2 1307.8,901.1 1312.4,912.7 1307.8,920.8 1302.0,917.3 1289.3,915.0 1286.9,898.8 1290.4,891.9 1296.2,873.3 1300.8,861.8 1310.1,852.5 1303.1,838.6 1302.0,835.1 1306.6,831.7 1308.9,824.7 1312.4,828.2 1315.9,822.4 1318.2,825.9 1324.0,822.4 1326.3,813.1 1335.1,800.6 1338.6,791.4 1350.2,779.8 1354.8,765.9 1361.8,754.4 1371.0,747.4 1372.2,733.5 1367.5,719.6 1369.9,703.4 1364.1,694.2 1361.8,682.6 1352.5,673.3 1351.3,664.1 1359.4,657.1 1361.8,645.6 1357.1,638.6 1359.4,631.7 1367.5,627.0 1367.5,590.0"/></clipPath></defs>
<g clip-path="url(#ind)"><g style="isolation:isolate" opacity="0.999"><rect x="1280" y="150" width="500" height="800" fill="#d8001c"/><polyline points="1490.4,469.0 1490.4,790.0" fill="none" stroke="#b00c2a" stroke-width="1.1" opacity=".9"/><polyline points="1556.1,463.0 1556.1,518.0" fill="none" stroke="#b00c2a" stroke-width="1.1" opacity=".9"/><polyline points="1611.1,460.0 1611.1,513.5" fill="none" stroke="#b00c2a" stroke-width="1.1" opacity=".9"/><polyline points="1652.4,489.0 1652.4,545.6" fill="none" stroke="#b00c2a" stroke-width="1.1" opacity=".9"/><polyline points="1490.4,518.0 1611.0,518.0" fill="none" stroke="#b00c2a" stroke-width="1.1" opacity=".9"/><polyline points="1611.0,513.5 1652.4,513.5" fill="none" stroke="#b00c2a" stroke-width="1.1" opacity=".9"/><polyline points="1545.4,518.0 1545.4,573.0" fill="none" stroke="#b00c2a" stroke-width="1.1" opacity=".9"/><polyline points="1600.4,518.0 1600.4,626.5" fill="none" stroke="#b00c2a" stroke-width="1.1" opacity=".9"/><polyline points="1644.7,545.6 1705.8,545.6" fill="none" stroke="#b00c2a" stroke-width="1.1" opacity=".9"/><polyline points="1644.7,545.6 1644.7,626.5" fill="none" stroke="#b00c2a" stroke-width="1.1" opacity=".9"/><polyline points="1693.6,545.6 1693.6,637.2" fill="none" stroke="#b00c2a" stroke-width="1.1" opacity=".9"/><polyline points="1495.0,573.0 1600.4,573.0" fill="none" stroke="#b00c2a" stroke-width="1.1" opacity=".9"/><polyline points="1600.4,560.8 1644.7,560.8" fill="none" stroke="#b00c2a" stroke-width="1.1" opacity=".9"/><polyline points="1556.1,573.0 1556.1,628.0" fill="none" stroke="#b00c2a" stroke-width="1.1" opacity=".9"/><polyline points="1368.0,603.6 1498.0,603.6" fill="none" stroke="#b00c2a" stroke-width="1.1" opacity=".9"/><polyline points="1455.3,603.6 1455.3,628.0" fill="none" stroke="#b00c2a" stroke-width="1.1" opacity=".9"/><polyline points="1693.6,594.4 1764.0,594.4" fill="none" stroke="#b00c2a" stroke-width="1.1" opacity=".9"/><polyline points="1644.7,608.2 1693.6,608.2" fill="none" stroke="#b00c2a" stroke-width="1.1" opacity=".9"/><polyline points="1492.0,628.0 1638.6,628.0" fill="none" stroke="#b00c2a" stroke-width="1.1" opacity=".9"/><polyline points="1537.8,628.0 1537.8,686.0" fill="none" stroke="#b00c2a" stroke-width="1.1" opacity=".9"/><polyline points="1579.0,628.0 1579.0,686.0" fill="none" stroke="#b00c2a" stroke-width="1.1" opacity=".9"/><polyline points="1638.6,626.5 1638.6,670.8 1672.2,655.6 1705.8,634.2 1727.2,634.2 1727.2,704.4 1718.0,707.5" fill="none" stroke="#b00c2a" stroke-width="1.1" opacity=".9"/><polyline points="1440.0,661.7 1492.0,661.7" fill="none" stroke="#b00c2a" stroke-width="1.1" opacity=".9"/><polyline points="1492.0,692.2 1550.0,692.2" fill="none" stroke="#b00c2a" stroke-width="1.1" opacity=".9"/><polyline points="1537.8,686.0 1620.3,686.0" fill="none" stroke="#b00c2a" stroke-width="1.1" opacity=".9"/><polyline points="1620.3,670.8 1620.3,729.0" fill="none" stroke="#b00c2a" stroke-width="1.1" opacity=".9"/><polyline points="1672.2,655.6 1672.2,707.5" fill="none" stroke="#b00c2a" stroke-width="1.1" opacity=".9"/><polyline points="1654.0,707.5 1761.0,707.5" fill="none" stroke="#b00c2a" stroke-width="1.1" opacity=".9"/><polyline points="1707.4,707.5 1707.4,747.0" fill="none" stroke="#b00c2a" stroke-width="1.1" opacity=".9"/><polyline points="1547.0,735.0 1608.0,735.0" fill="none" stroke="#b00c2a" stroke-width="1.1" opacity=".9"/><polyline points="1608.0,735.0 1608.0,800.0" fill="none" stroke="#b00c2a" stroke-width="1.1" opacity=".9"/><polyline points="1458.3,710.6 1458.3,790.0" fill="none" stroke="#b00c2a" stroke-width="1.1" opacity=".9"/><polyline points="1492.0,750.3 1547.0,750.3" fill="none" stroke="#b00c2a" stroke-width="1.1" opacity=".9"/><polyline points="1550.0,686.0 1550.0,790.0" fill="none" stroke="#b00c2a" stroke-width="1.1" opacity=".9"/><polyline points="1705.8,444.5 1765.0,444.5" fill="none" stroke="#b00c2a" stroke-width="1.1" opacity=".9"/><polyline points="1410.4,590.0 1410.4,660.6" fill="none" stroke="#b00c2a" stroke-width="1.1" opacity=".9"/><polyline points="1361.0,645.6 1410.4,645.6" fill="none" stroke="#b00c2a" stroke-width="1.1" opacity=".9"/><polyline points="1444.0,603.6 1444.0,629.4 1492.5,629.4" fill="none" stroke="#b00c2a" stroke-width="1.1" opacity=".9"/><polyline points="1492.5,691.9 1540.0,691.9" fill="none" stroke="#b00c2a" stroke-width="1.1" opacity=".9"/><polyline points="1430.4,711.0 1411.9,727.8 1406.3,751.9 1410.0,777.8 1397.0,779.6 1378.5,781.5 1360.0,787.0" fill="none" stroke="#b00c2a" stroke-width="1.1" opacity=".9"/><polyline points="1458.1,711.0 1458.1,783.3" fill="none" stroke="#b00c2a" stroke-width="1.1" opacity=".9"/><polyline points="1493.3,700.0 1493.3,831.5" fill="none" stroke="#b00c2a" stroke-width="1.1" opacity=".9"/><polyline points="1410.0,783.3 1493.3,783.3" fill="none" stroke="#b00c2a" stroke-width="1.1" opacity=".9"/><polyline points="1435.0,783.3 1435.0,838.9" fill="none" stroke="#b00c2a" stroke-width="1.1" opacity=".9"/><polyline points="1378.5,781.5 1387.8,807.4 1398.9,809.3 1398.9,838.9" fill="none" stroke="#b00c2a" stroke-width="1.1" opacity=".9"/><polyline points="1378.5,838.9 1441.5,838.9 1441.5,857.4 1423.0,870.4 1408.0,900.0" fill="none" stroke="#b00c2a" stroke-width="1.1" opacity=".9"/><polyline points="1441.5,840.7 1474.8,840.7" fill="none" stroke="#b00c2a" stroke-width="1.1" opacity=".9"/><polyline points="1474.8,831.5 1474.8,885.0" fill="none" stroke="#b00c2a" stroke-width="1.1" opacity=".9"/><polyline points="1474.8,831.5 1508.0,831.5 1508.0,805.6" fill="none" stroke="#b00c2a" stroke-width="1.1" opacity=".9"/><polyline points="1493.3,805.6 1547.0,805.6" fill="none" stroke="#b00c2a" stroke-width="1.1" opacity=".9"/><polyline points="1493.3,750.0 1547.0,750.0" fill="none" stroke="#b00c2a" stroke-width="1.1" opacity=".9"/><polyline points="1547.0,700.0 1547.0,805.6" fill="none" stroke="#b00c2a" stroke-width="1.1" opacity=".9"/><polyline points="1554.4,800.0 1545.2,848.0" fill="none" stroke="#b00c2a" stroke-width="1.1" opacity=".9"/><polyline points="1367.0,577.6 1443.3,578.8" fill="none" stroke="#b00c2a" stroke-width="1.1" opacity=".9"/><polyline points="1443.3,530.1 1443.3,603.6" fill="none" stroke="#b00c2a" stroke-width="1.1" opacity=".9"/><polyline points="1612.0,463.0 1612.0,517.4" fill="none" stroke="#b00c2a" stroke-width="1.1" opacity=".9"/><polyline points="1600.5,517.4 1600.5,573.0" fill="none" stroke="#b00c2a" stroke-width="1.1" opacity=".9"/><polyline points="1652.6,489.2 1705.8,489.2" fill="none" stroke="#b00c2a" stroke-width="1.1" opacity=".9"/><polyline points="1705.8,395.9 1705.8,503.0" fill="none" stroke="#b00c2a" stroke-width="1.1" opacity=".9"/><polyline points="1705.4,544.0 1705.4,594.4" fill="none" stroke="#b00c2a" stroke-width="1.1" opacity=".9"/><polyline points="1693.0,594.4 1693.0,634.2" fill="none" stroke="#b00c2a" stroke-width="1.1" opacity=".9"/><polyline points="1612.0,561.4 1644.5,561.4" fill="none" stroke="#b00c2a" stroke-width="1.1" opacity=".9"/><polygon points="1360.0,150.0 1780.0,150.0 1780.0,394.7 1705.8,395.9 1705.8,489.2 1652.6,489.2 1652.6,431.8 1611.0,431.8 1611.0,462.5 1555.6,462.5 1555.6,470.6 1490.1,470.0 1490.1,530.1 1443.3,530.1 1443.3,578.8 1390.1,577.6 1388.9,561.4 1390.1,542.9 1392.4,531.3 1388.9,522.0 1383.1,512.8 1384.3,494.3 1382.0,479.2 1373.9,476.9 1368.6,475.7 1360.0,475.7" fill="#e39c38"/><polygon points="1360.0,150.0 1581.5,150.0 1581.5,219.5 1522.5,219.5 1522.5,227.6 1498.1,228.3 1488.9,234.5 1484.3,248.4 1475.0,257.7 1455.3,267.0 1455.3,328.3 1447.2,329.0 1447.2,343.3 1431.0,343.3 1431.0,363.0 1360.0,363.0" fill="#e4f24a"/><rect x="1431.8" y="396.3" width="58.3" height="67.2" fill="#e4f24a"/><rect x="1410.4" y="660.6" width="81.5" height="50.2" fill="#e39c38"/><polygon points="1708.1,503.0 1780.0,502.4 1780.0,593.8 1732.5,593.8 1732.5,556.8 1710.5,556.8 1710.5,544.0 1705.4,544.0 1705.4,529.0 1708.1,529.0" fill="#e39c38"/><polygon points="1280.0,837.5 1328.6,837.5 1328.6,840.9 1344.4,842.1 1344.4,847.9 1377.2,849.0 1379.5,889.5 1379.5,930.0 1280.0,930.0" fill="#e39c38"/><polyline points="1413.7,191.7 1413.7,264.6" fill="none" stroke="#9c6a26" stroke-width="1.1" opacity=".9"/><polyline points="1455.3,175.5 1455.3,267.0" fill="none" stroke="#9c6a26" stroke-width="1.1" opacity=".9"/><polyline points="1514.8,165.0 1514.8,185.0 1519.0,192.0 1520.0,210.0 1515.0,220.0 1515.0,227.6" fill="none" stroke="#9c6a26" stroke-width="1.1" opacity=".9"/><polyline points="1368.5,279.7 1387.0,280.8 1405.6,271.6 1426.4,256.5 1449.5,269.3 1455.3,267.0 1475.0,257.7 1484.3,248.4 1488.9,234.5 1498.1,228.3 1522.5,227.6 1522.5,219.5 1581.5,219.5 1581.5,164.4" fill="none" stroke="#9c6a26" stroke-width="1.1" opacity=".9"/><polyline points="1405.6,271.6 1405.6,363.0" fill="none" stroke="#9c6a26" stroke-width="1.1" opacity=".9"/><polyline points="1455.3,267.0 1455.3,328.3 1447.2,329.0 1447.2,343.3 1431.0,343.3 1431.0,363.0 1368.5,363.0" fill="none" stroke="#9c6a26" stroke-width="1.1" opacity=".9"/><polyline points="1522.5,227.6 1522.5,329.4" fill="none" stroke="#9c6a26" stroke-width="1.1" opacity=".9"/><polyline points="1455.3,279.7 1579.0,279.7" fill="none" stroke="#9c6a26" stroke-width="1.1" opacity=".9"/><polyline points="1581.5,219.5 1581.5,278.5 1579.7,278.5 1579.7,294.7 1588.9,294.7 1588.9,304.0 1637.5,304.0" fill="none" stroke="#9c6a26" stroke-width="1.1" opacity=".9"/><polyline points="1447.2,329.4 1565.3,329.4" fill="none" stroke="#9c6a26" stroke-width="1.1" opacity=".9"/><polyline points="1506.3,329.4 1506.3,364.2" fill="none" stroke="#9c6a26" stroke-width="1.1" opacity=".9"/><polyline points="1566.4,313.0 1566.4,385.0 1567.0,395.9" fill="none" stroke="#9c6a26" stroke-width="1.1" opacity=".9"/><polyline points="1566.4,313.0 1598.2,312.1" fill="none" stroke="#9c6a26" stroke-width="1.1" opacity=".9"/><polyline points="1431.0,343.3 1431.0,529.0" fill="none" stroke="#9c6a26" stroke-width="1.1" opacity=".9"/><polyline points="1478.5,363.5 1515.1,363.5 1515.1,370.4 1536.4,370.4 1536.4,422.0" fill="none" stroke="#9c6a26" stroke-width="1.1" opacity=".9"/><polyline points="1641.0,164.4 1641.0,276.2 1637.5,278.5 1637.5,312.1 1688.5,312.1" fill="none" stroke="#9c6a26" stroke-width="1.1" opacity=".9"/><polyline points="1708.1,164.4 1708.1,261.2" fill="none" stroke="#9c6a26" stroke-width="1.1" opacity=".9"/><polyline points="1691.3,261.2 1691.3,278.5 1688.5,278.5 1688.5,379.2" fill="none" stroke="#9c6a26" stroke-width="1.1" opacity=".9"/><polyline points="1726.7,328.3 1726.7,394.7" fill="none" stroke="#9c6a26" stroke-width="1.1" opacity=".9"/><polyline points="1598.2,305.0 1598.2,379.2" fill="none" stroke="#9c6a26" stroke-width="1.1" opacity=".9"/><polyline points="1643.3,312.1 1643.3,379.2" fill="none" stroke="#9c6a26" stroke-width="1.1" opacity=".9"/><polyline points="1641.0,210.2 1765.3,210.2" fill="none" stroke="#9c6a26" stroke-width="1.1" opacity=".9"/><polyline points="1582.5,227.6 1641.0,227.6" fill="none" stroke="#9c6a26" stroke-width="1.1" opacity=".9"/><polyline points="1641.0,255.4 1660.0,255.4 1660.0,261.2 1765.3,261.2" fill="none" stroke="#9c6a26" stroke-width="1.1" opacity=".9"/><polyline points="1688.5,328.3 1765.3,328.3" fill="none" stroke="#9c6a26" stroke-width="1.1" opacity=".9"/><polyline points="1598.2,379.2 1688.5,379.2" fill="none" stroke="#9c6a26" stroke-width="1.1" opacity=".9"/><polyline points="1368.6,412.8 1431.8,412.8" fill="none" stroke="#9c6a26" stroke-width="1.1" opacity=".9"/><polyline points="1382.0,473.4 1390.0,464.0 1406.0,452.6 1431.3,436.4" fill="none" stroke="#9c6a26" stroke-width="1.1" opacity=".9"/><polyline points="1383.0,512.8 1431.8,512.8" fill="none" stroke="#9c6a26" stroke-width="1.1" opacity=".9"/><polyline points="1478.5,363.0 1478.5,396.3" fill="none" stroke="#9c6a26" stroke-width="1.1" opacity=".9"/><polyline points="1490.1,422.0 1545.2,422.0 1549.8,429.4 1555.6,427.6 1611.0,427.1" fill="none" stroke="#9c6a26" stroke-width="1.1" opacity=".9"/><polyline points="1555.6,427.6 1555.6,462.5" fill="none" stroke="#9c6a26" stroke-width="1.1" opacity=".9"/><polyline points="1431.8,396.3 1490.1,396.3 1490.1,470.0" fill="none" stroke="#9c6a26" stroke-width="1.1" opacity=".9"/><polyline points="1431.8,463.5 1490.1,463.5" fill="none" stroke="#9c6a26" stroke-width="1.1" opacity=".9"/><polyline points="1536.4,396.3 1611.0,396.3" fill="none" stroke="#9c6a26" stroke-width="1.1" opacity=".9"/><polyline points="1599.4,379.2 1599.4,396.3" fill="none" stroke="#9c6a26" stroke-width="1.1" opacity=".9"/><polyline points="1672.3,379.7 1672.3,431.8" fill="none" stroke="#9c6a26" stroke-width="1.1" opacity=".9"/><polyline points="1672.3,395.9 1705.8,395.9" fill="none" stroke="#9c6a26" stroke-width="1.1" opacity=".9"/><polyline points="1726.7,379.7 1726.7,394.7" fill="none" stroke="#9c6a26" stroke-width="1.1" opacity=".9"/><polyline points="1611.0,379.7 1611.0,431.8" fill="none" stroke="#9c6a26" stroke-width="1.1" opacity=".9"/><polyline points="1343.9,842.0 1344.4,898.0" fill="none" stroke="#9c6a26" stroke-width="1.1" opacity=".9"/><polyline points="1710.5,556.8 1764.0,556.8" fill="none" stroke="#9c6a26" stroke-width="1.1" opacity=".9"/><polygon points="1360.0,150.0 1480.0,150.0 1471.0,164.4 1454.4,175.3 1424.4,186.6 1411.3,191.3 1401.0,191.0 1385.0,179.0 1375.6,181.0 1368.0,175.3 1360.0,175.0" fill="#a9c9e9"/><circle cx="1548.5" cy="188" r="1.5" fill="#555"/></g></g>
<g transform="translate(1348,155)"><path d="M0,3.41 L18,3.41 L18,8.525 Q18,15.5 9.0,15.5 Q0,15.5 0,8.525 Z" fill="#4f79a6" stroke="#d8dde2" stroke-width=".6"/><rect x="0" y="0" width="18" height="3.41" fill="#b2424c"/></g>
<g transform="translate(1325.7,219.4)"><path d="M0,3.4319999999999986 L17.700000000000045,3.4319999999999986 L17.700000000000045,8.579999999999998 Q17.700000000000045,15.599999999999994 8.850000000000023,15.599999999999994 Q0,15.599999999999994 0,8.579999999999998 Z" fill="#4f79a6" stroke="#d8dde2" stroke-width=".6"/><rect x="0" y="0" width="17.700000000000045" height="3.4319999999999986" fill="#b2424c"/></g>
<g transform="translate(1246.8,506)"><path d="M0,3.69599999999999 L17.799999999999955,3.69599999999999 L17.799999999999955,9.239999999999975 Q17.799999999999955,16.799999999999955 8.899999999999977,16.799999999999955 Q0,16.799999999999955 0,9.239999999999975 Z" fill="#4f79a6" stroke="#d8dde2" stroke-width=".6"/><rect x="0" y="0" width="17.799999999999955" height="3.69599999999999" fill="#b2424c"/></g>
<g transform="translate(1250,822.8)"><path d="M0,3.12400000000001 L18,3.12400000000001 L18,7.810000000000025 Q18,14.200000000000045 9.0,14.200000000000045 Q0,14.200000000000045 0,7.810000000000025 Z" fill="#4f79a6" stroke="#d8dde2" stroke-width=".6"/><rect x="0" y="0" width="18" height="3.12400000000001" fill="#b2424c"/></g>
<g transform="translate(1355.7,1017.8)"><path d="M0,3.65200000000003 L17.700000000000045,3.65200000000003 L17.700000000000045,9.130000000000075 Q17.700000000000045,16.600000000000136 8.850000000000023,16.600000000000136 Q0,16.600000000000136 0,9.130000000000075 Z" fill="#4f79a6" stroke="#d8dde2" stroke-width=".6"/><rect x="0" y="0" width="17.700000000000045" height="3.65200000000003" fill="#b2424c"/></g>
<g transform="translate(1625.7,847.8)"><path d="M0,3.41 L16.59999999999991,3.41 L16.59999999999991,8.525 Q16.59999999999991,15.5 8.299999999999955,15.5 Q0,15.5 0,8.525 Z" fill="#4f79a6" stroke="#d8dde2" stroke-width=".6"/><rect x="0" y="0" width="16.59999999999991" height="3.41" fill="#b2424c"/></g>
<g transform="translate(1826.8,927.8)"><path d="M0,3.41 L17.799999999999955,3.41 L17.799999999999955,8.525 Q17.799999999999955,15.5 8.899999999999977,15.5 Q0,15.5 0,8.525 Z" fill="#4f79a6" stroke="#d8dde2" stroke-width=".6"/><rect x="0" y="0" width="17.799999999999955" height="3.41" fill="#b2424c"/></g>
<g transform="translate(1781.2,694.4)"><path d="M0,3.432000000000005 L17.799999999999955,3.432000000000005 L17.799999999999955,8.580000000000013 Q17.799999999999955,15.600000000000023 8.899999999999977,15.600000000000023 Q0,15.600000000000023 0,8.580000000000013 Z" fill="#4f79a6" stroke="#d8dde2" stroke-width=".6"/><rect x="0" y="0" width="17.799999999999955" height="3.432000000000005" fill="#b2424c"/></g>
<g transform="translate(1876.8,596)"><path d="M0,3.52 L17.799999999999955,3.52 L17.799999999999955,8.8 Q17.799999999999955,16 8.899999999999977,16 Q0,16 0,8.8 Z" fill="#4f79a6" stroke="#d8dde2" stroke-width=".6"/><rect x="0" y="0" width="17.799999999999955" height="3.52" fill="#b2424c"/></g>
<g transform="translate(1288,135)"><path d="M0,1.32 L16,1.32 L16,3.3000000000000003 Q16,6 8.0,6 Q0,6 0,3.3000000000000003 Z" fill="#4f79a6" stroke="#d8dde2" stroke-width=".6"/><rect x="0" y="0" width="16" height="1.32" fill="#b2424c"/></g>
<g transform="translate(1497,135)"><path d="M0,1.43 L18,1.43 L18,3.575 Q18,6.5 9.0,6.5 Q0,6.5 0,3.575 Z" fill="#4f79a6" stroke="#d8dde2" stroke-width=".6"/><rect x="0" y="0" width="18" height="1.43" fill="#b2424c"/></g>
<rect x="1345" y="523" width="9" height="11" rx="1" fill="#a9a9a6" stroke="#555" stroke-width=".6"/>
<text x="1239" y="160.5" font-family="Liberation Sans" font-size="10" fill="#3a3a3a" letter-spacing="0.3">Aurora</text>
<text x="1304.5" y="196" font-family="Liberation Sans" font-size="10" fill="#3a3a3a" letter-spacing="0.3">Tinley Park</text>
<text x="1274.5" y="206" font-family="Liberation Sans" font-size="10" fill="#3a3a3a" letter-spacing="0.3">Joliet</text>
<text x="1296.8" y="285" font-family="Liberation Sans" font-size="10" fill="#3a3a3a" letter-spacing="0.3">Kankakee</text>
<text x="1238" y="477.2" font-family="Liberation Sans" font-size="10" fill="#3a3a3a" letter-spacing="0.3">Champaign</text>
<text x="1334.6" y="473" font-family="Liberation Sans" font-size="10" fill="#3a3a3a" letter-spacing="0.3">Danvill</text>
<text x="1356.8" y="600" font-family="Liberation Sans" font-size="10" fill="#3a3a3a" letter-spacing="0.3">Te</text>
<text x="1200" y="666" font-family="Liberation Sans" font-size="9" fill="#3a3a3a" letter-spacing="0.3">Effingham</text>
<text x="1349" y="748.3" font-family="Liberation Sans" font-size="10" fill="#3a3a3a" letter-spacing="0.3">Vinc</text>
<text x="1199" y="1044.4" font-family="Liberation Sans" font-size="9" fill="#3a3a3a" letter-spacing="0.3">aducah</text>
<text x="1350" y="1083" font-family="Liberation Sans" font-size="9" fill="#3a3a3a" letter-spacing="0.3">Hopkinsville</text>
<text x="1582.3" y="904.4" font-family="Liberation Sans" font-size="9" fill="#3a3a3a" letter-spacing="0.3">Radcliff</text>
<text x="1582.3" y="931" font-family="Liberation Sans" font-size="8.6" fill="#3a3a3a" letter-spacing="0.3">Elizabethtown</text>
<text x="1491" y="1058" font-family="Liberation Sans" font-size="10" fill="#3a3a3a" letter-spacing="0.3">Bowling Green</text>
<text x="1786.8" y="865.6" font-family="Liberation Sans" font-size="10" fill="#3a3a3a" letter-spacing="0.3">Lexington</text>
<text x="1774.6" y="1042.2" font-family="Liberation Sans" font-size="9.5" fill="#3a3a3a" letter-spacing="0.3">Somerset</text>
<text x="1855.7" y="1035.6" font-family="Liberation Sans" font-size="9" fill="#3a3a3a" letter-spacing="0.3">London</text>
<text x="1854.6" y="1069" font-family="Liberation Sans" font-size="9.5" fill="#3a3a3a" letter-spacing="0.3">Corbin</text>
<text x="1727.9" y="835.6" font-family="Liberation Sans" font-size="12" font-weight="bold" fill="#444444">Frankfort</text>
<text x="1777.9" y="666.7" font-family="Liberation Sans" font-size="12" font-weight="bold" fill="#444444">Cincinnati</text>
<text x="1833.4" y="543.3" font-family="Liberation Sans" font-size="12.5" font-weight="bold" fill="#444444">Dayton</text>
<text x="1845.7" y="446.7" font-family="Liberation Sans" font-size="9.5" fill="#3a3a3a" letter-spacing="0.3">Sidney</text>
<text x="1834.6" y="472.2" font-family="Liberation Sans" font-size="9.5" fill="#3a3a3a" letter-spacing="0.3">Piqua</text>
<text x="1884.6" y="514.4" font-family="Liberation Sans" font-size="10" fill="#3a3a3a" letter-spacing="0.3">Spri</text>
<text x="1765" y="532.2" font-family="Liberation Sans" font-size="10" fill="#3a3a3a" letter-spacing="0.3">nd</text>
<text x="1765" y="593.3" font-family="Liberation Sans" font-size="9.5" fill="#3a3a3a" letter-spacing="0.3">xford</text>
<text x="1855.7" y="357.2" font-family="Liberation Sans" font-size="10" fill="#3a3a3a" letter-spacing="0.3">Lima</text>
<text x="1432" y="169" font-family="Liberation Sans" font-size="9.5" fill="#3a3a3a" letter-spacing="0.3">Michigan City</text>
<text x="1384" y="191.3" font-family="Liberation Sans" font-size="10.5" fill="#3a3a3a" letter-spacing="0.3">Gary</text>
<text x="1635.5" y="823" font-family="Liberation Sans" font-size="11" font-weight="bold" fill="#444444">ille</text>
<text x="1679" y="969" font-family="Liberation Sans" font-size="10.5" fill="#6c6c6c" letter-spacing="0.6">Kentucky</text>
<text x="1655" y="995.6" font-family="Liberation Sans" font-size="9" fill="#3a3a3a" letter-spacing="0.2">Campbellsville</text>
<text x="1215" y="970" font-family="Liberation Sans" font-size="7" font-style="italic" fill="#5d7a5a" letter-spacing="0.4">Shawnee</text>
<text x="1203" y="979" font-family="Liberation Sans" font-size="7" font-style="italic" fill="#5d7a5a" letter-spacing="0.4">National Forest</text>
<text x="1847" y="983" font-family="Liberation Sans" font-size="7" font-style="italic" fill="#5d7a5a" letter-spacing="0.4">Daniel Boone</text>
<text x="1844" y="993" font-family="Liberation Sans" font-size="7" font-style="italic" fill="#5d7a5a" letter-spacing="0.4">National Forest</text>
<rect x="1211" y="146" width="26" height="51.5" fill="#ececec"/>
<path d="M1224,155.5 L1224,163 M1220.3,159.3 L1227.7,159.3" stroke="#555" stroke-width="1"/>
<path d="M1219.5,185 L1228,185" stroke="#666" stroke-width="1"/>
<rect x="1211" y="205" width="26" height="26" fill="#ececec"/>
<path d="M1218.5,224 L1218.5,216.5 L1223.5,211.5 L1228.5,216.5 L1228.5,224 L1225.5,224 L1225.5,219.5 L1221.5,219.5 L1221.5,224 Z" fill="none" stroke="#333" stroke-width="0.9"/>
<rect x="1866" y="146" width="26" height="26" fill="#ececec"/>
<circle cx="1878" cy="158" r="5" fill="none" stroke="#333" stroke-width="1.1"/><path d="M1881.5,161.5 L1885.5,165.5" stroke="#333" stroke-width="1.3"/>
</svg>
</div>
</body></html>
